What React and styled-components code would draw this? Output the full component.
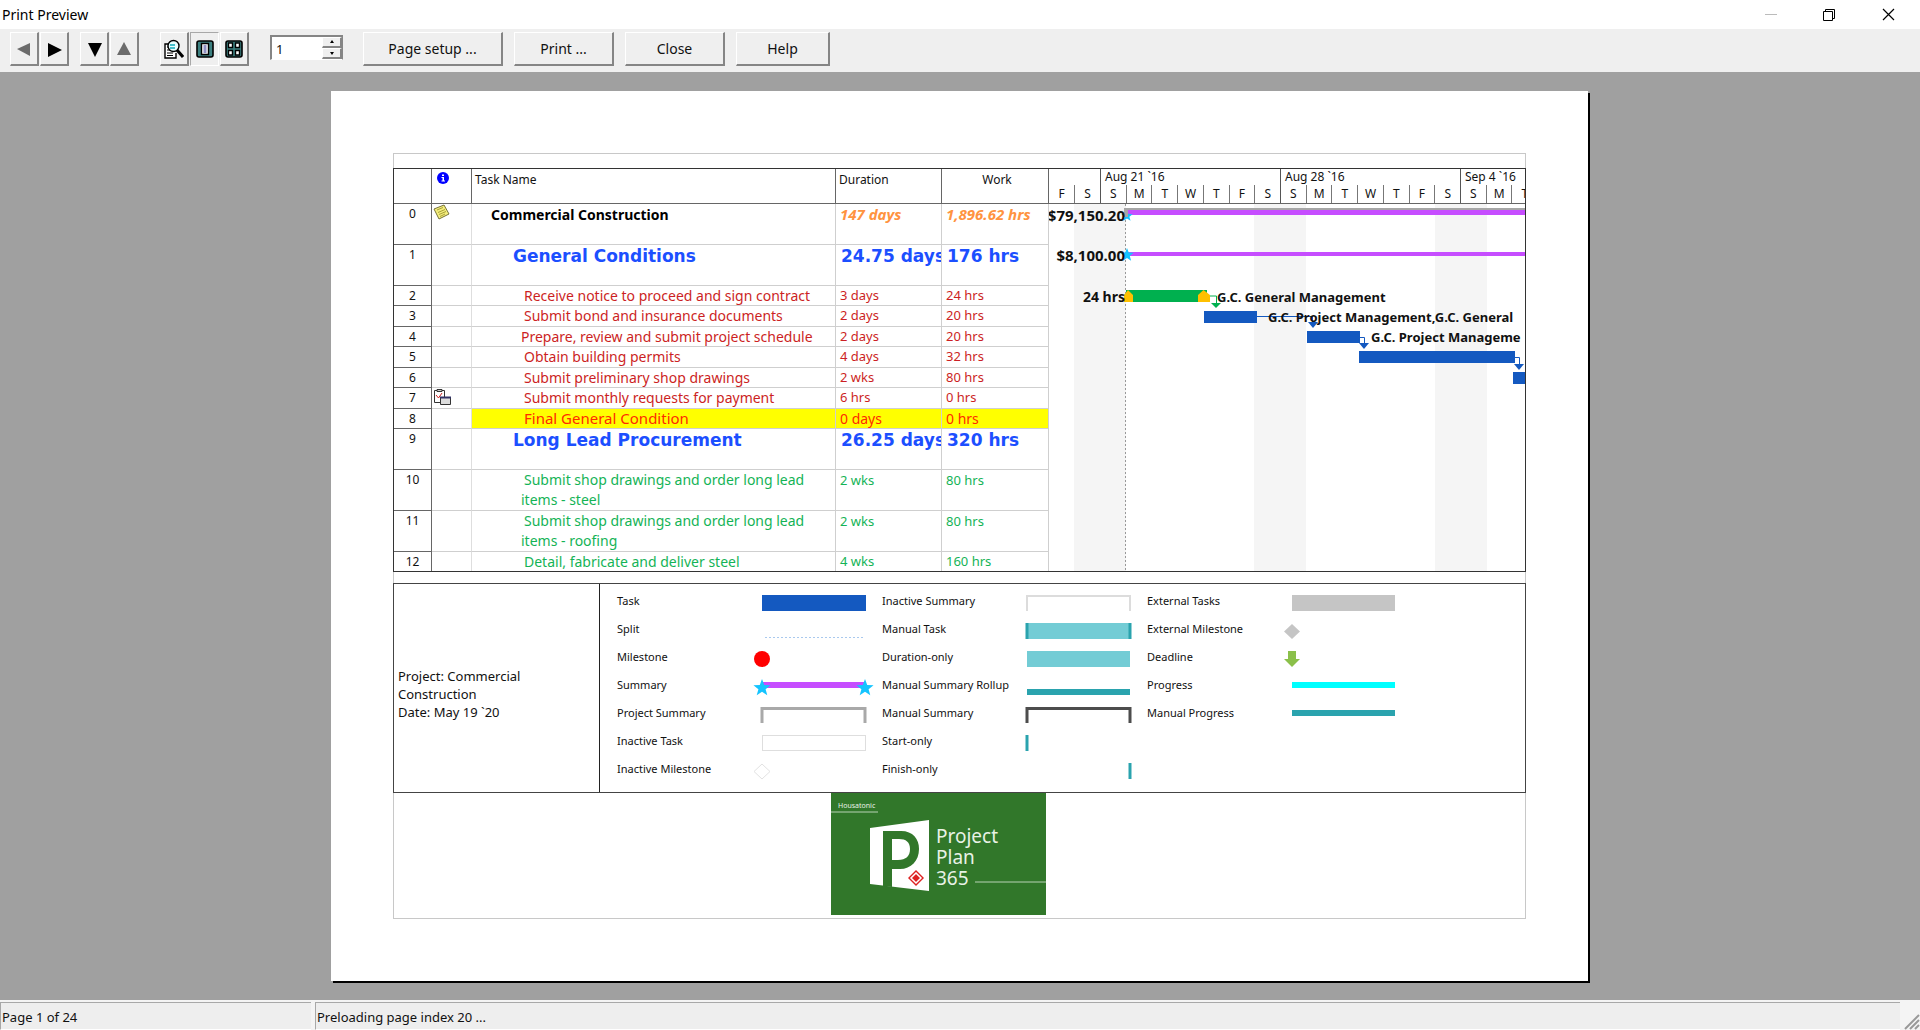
import React, { useState } from "react";
import styled, { createGlobalStyle, css } from "styled-components";

const weeks = [
  { label: "", days: ["F", "S"] },
  { label: "Aug 21 `16", days: ["S", "M", "T", "W", "T", "F", "S"] },
  { label: "Aug 28 `16", days: ["S", "M", "T", "W", "T", "F", "S"] },
  { label: "Sep 4 `16", days: ["S", "M", "T", "W", "T", "F", "S"] },
];

const tasks = [
  { name: "Commercial Construction", duration: "147 days", work: "1,896.62 hrs", kind: "project", tall: true, note: true },
  { name: "General Conditions", duration: "24.75 days", work: "176 hrs", kind: "summary", tall: true },
  { name: "Receive notice to proceed and sign contract", duration: "3 days", work: "24 hrs", kind: "red" },
  { name: "Submit bond and insurance documents", duration: "2 days", work: "20 hrs", kind: "red" },
  { name: "Prepare, review and submit project schedule", duration: "2 days", work: "20 hrs", kind: "red", flush: true },
  { name: "Obtain building permits", duration: "4 days", work: "32 hrs", kind: "red" },
  { name: "Submit preliminary shop drawings", duration: "2 wks", work: "80 hrs", kind: "red" },
  { name: "Submit monthly requests for payment", duration: "6 hrs", work: "0 hrs", kind: "red", recurring: true },
  { name: "Final General Condition", duration: "0 days", work: "0 hrs", kind: "final" },
  { name: "Long Lead Procurement", duration: "26.25 days", work: "320 hrs", kind: "summary", tall: true },
  { name: "Submit shop drawings and order long lead items - steel", duration: "2 wks", work: "80 hrs", kind: "green", tall: true },
  { name: "Submit shop drawings and order long lead items - roofing", duration: "2 wks", work: "80 hrs", kind: "green", tall: true },
  { name: "Detail, fabricate and deliver steel", duration: "4 wks", work: "160 hrs", kind: "green" },
];

const star = (x, y, r) =>
  Array.from({ length: 10 }, (_, i) => {
    const a = (Math.PI / 5) * i - Math.PI / 2;
    const d = i % 2 ? r * 0.42 : r;
    return `${x + d * Math.cos(a)},${y + d * Math.sin(a)}`;
  }).join(" ");

const TEAL = "#2aa3ae";
const AQUA = "#73ccd5";

const legend = [
  [
    ["Task", <rect width="104" height="16" fill="#1459c0" />],
    ["Split", <path d="M3 14.5H102" stroke="#a9c9ee" strokeDasharray="2 2" />],
    ["Milestone", <circle cx="0" cy="8" r="8" fill="#f00" />],
    [
      "Summary",
      <>
        <rect y="3" width="104" height="6" fill="#c64dff" />
        <polygon points={star(0, 9, 9)} fill="#14c4ff" />
        <polygon points={star(103, 9, 9)} fill="#14c4ff" />
      </>,
    ],
    ["Project Summary", <path d="M0 16V1.5H103V16" fill="none" stroke="#a9a9a9" strokeWidth="3" />],
    ["Inactive Task", <rect x="0.5" y="0.5" width="103" height="15" fill="none" stroke="#dedede" />],
    ["Inactive Milestone", <path d="M0 1L8 8.5L0 16L-8 8.5Z" fill="none" stroke="#e2e2e2" />],
  ],
  [
    ["Inactive Summary", <path d="M0 16V1H103V16" fill="none" stroke="#dcdcdc" strokeWidth="2" />],
    [
      "Manual Task",
      <>
        <rect width="104" height="16" fill={AQUA} />
        <path d="M0 0V16M103 0V16" stroke={TEAL} strokeWidth="3" />
      </>,
    ],
    ["Duration-only", <rect width="103" height="16" fill={AQUA} />],
    ["Manual Summary Rollup", <rect y="10" width="103" height="6" fill={TEAL} />],
    ["Manual Summary", <path d="M0 16V1.5H103V16" fill="none" stroke="#4d4d4d" strokeWidth="3" />],
    ["Start-only", <path d="M0 0V16" stroke={TEAL} strokeWidth="3" />],
    ["Finish-only", <path d="M103 0V16" stroke={TEAL} strokeWidth="3" />],
  ],
  [
    ["External Tasks", <rect width="103" height="16" fill="#c5c5c5" />],
    ["External Milestone", <path d="M0 1L8 8.5L0 16L-8 8.5Z" fill="#c5c5c5" />],
    ["Deadline", <path d="M-4 0H4V8H8L0 16L-8 8H-4Z" fill="#8bc04a" />],
    ["Progress", <rect y="3" width="103" height="6" fill="#0ff" />],
    ["Manual Progress", <rect y="3" width="103" height="6" fill={TEAL} />],
  ],
];

function App() {
  const [page, setPage] = useState(1);

  return (
    <Window>
      <GlobalStyle />
      <TitleBar>
        <Title>Print Preview</Title>
        <Caption aria-label="Minimize">
          <svg width="14" height="14">
            <path d="M2 6.5H14" stroke="#bbb" />
          </svg>
        </Caption>
        <Caption aria-label="Restore">
          <svg width="14" height="14" fill="none" stroke="#000">
            <path d="M1.5 3.5H10.5V12.5H1.5ZM3.5 3V1.5H12.5V10.5H11" />
          </svg>
        </Caption>
        <Caption aria-label="Close window">
          <svg width="14" height="14">
            <path d="M1 1L12 12M12 1L1 12" stroke="#000" strokeWidth="1.2" />
          </svg>
        </Caption>
      </TitleBar>

      <Toolbar>
        <Group>
          <IconButton aria-label="Previous page">
            <svg width="20" height="20">
              <path d="M3 10L16 4V17Z" fill="#6b6b6b" />
            </svg>
          </IconButton>
          <IconButton aria-label="Next page">
            <svg width="20" height="20">
              <path d="M18 11L4 4V18Z" fill="#000" />
            </svg>
          </IconButton>
        </Group>
        <Group>
          <IconButton aria-label="Page down">
            <svg width="20" height="20">
              <path d="M11 18L4 4H18Z" fill="#000" />
            </svg>
          </IconButton>
          <IconButton aria-label="Page up">
            <svg width="20" height="20">
              <path d="M10 3L17 16H3Z" fill="#6b6b6b" />
            </svg>
          </IconButton>
        </Group>
        <Group $wide>
          <IconButton aria-label="Zoom">
            <svg width="20" height="20" fill="none" stroke="#000" strokeWidth="1.4">
              <path d="M5 5H1V19H12V14" fill="#fff" />
              <path d="M3 8H5M3 11H6M3 14H9M3 16.5H9" strokeWidth="1" />
              <circle cx="9.5" cy="7" r="5.5" fill="#e8ffff" />
              <path d="M6 6H11M6 9H11" stroke="#1ab" />
              <path d="M13 11L19 18" strokeWidth="3" />
            </svg>
          </IconButton>
          <IconButton aria-label="Single page" aria-pressed="true" $pressed>
            <svg width="18" height="18">
              <rect x="1" y="1" width="16" height="16" rx="2" fill="#3c8080" stroke="#000" strokeWidth="1.6" />
              <path d="M5.500 3.500H12.500V14.500H5.500Z" fill="#fff" stroke="#000" strokeWidth="1.4" />
              <path d="M7.500 6H10.500M7.500 8H10.500M7.500 10H10.500M7.500 12H10.500" stroke="#228" />
            </svg>
          </IconButton>
          <IconButton aria-label="Multiple pages">
            <svg width="18" height="18">
              <rect x="1" y="1" width="16" height="16" rx="2" fill="#3c8080" stroke="#000" strokeWidth="1.6" />
              <path
                d="M3.500 3H7.500V7.500H3.500ZM10.500 3H14.500V7.500H10.500ZM3.500 10.500H7.500V15H3.500ZM10.500 10.500H14.500V15H10.500Z"
                fill="#fff"
                stroke="#000"
                strokeWidth="1.4"
              />
            </svg>
          </IconButton>
        </Group>
        <Spinner>
          <input
            type="text"
            aria-label="Page number"
            value={page}
            onChange={(e) => setPage(Number(e.target.value) || 1)}
          />
          <Steps>
            <button aria-label="Increase" onClick={() => setPage(Math.min(24, page + 1))}>
              <svg width="6" height="4">
                <path d="M3 0L5 3H1Z" />
              </svg>
            </button>
            <button aria-label="Decrease" onClick={() => setPage(Math.max(1, page - 1))}>
              <svg width="6" height="4">
                <path d="M3 4L5 1H1Z" />
              </svg>
            </button>
          </Steps>
        </Spinner>
        <TextButton $width={140}>Page setup ...</TextButton>
        <TextButton $width={100}>Print ...</TextButton>
        <TextButton $width={100}>Close</TextButton>
        <TextButton $width={94}>Help</TextButton>
      </Toolbar>

      <Viewport>
        <Sheet>
          <Margins>
            <Gantt>
              <TaskTable>
                <colgroup>
                  <col width="38" />
                  <col width="40" />
                  <col width="364" />
                  <col width="106" />
                  <col width="107" />
                </colgroup>
                <thead>
                  <tr>
                    <Head />
                    <Head>
                      <InfoIcon />
                    </Head>
                    <Head>Task Name</Head>
                    <Head>Duration</Head>
                    <Head $center>Work</Head>
                  </tr>
                </thead>
                <tbody>
                  {tasks.map((task, i) => (
                    <TaskRow key={i} $tall={task.tall}>
                      <IdCell>{i}</IdCell>
                      <IconCell>
                        {task.note && <NoteIcon />}
                        {task.recurring && <RecurringIcon />}
                      </IconCell>
                      <NameCell $kind={task.kind} $flush={task.flush}>
                        {task.name}
                      </NameCell>
                      <ValueCell $kind={task.kind}>{task.duration}</ValueCell>
                      <ValueCell $kind={task.kind}>{task.work}</ValueCell>
                    </TaskRow>
                  ))}
                </tbody>
              </TaskTable>
              <ChartPane>
                <Timescale>
                  {weeks.map((week, i) => (
                    <Week key={i} $full={week.days.length === 7}>
                      <WeekLabel>{week.label}</WeekLabel>
                      <Days>
                        {week.days.map((day, d) => (
                          <Day key={d}>{day}</Day>
                        ))}
                      </Days>
                    </Week>
                  ))}
                </Timescale>
                <Bars />
              </ChartPane>
            </Gantt>

            <Legend>
              <ProjectInfo>
                Project: Commercial Construction
                <br />
                Date: May 19 `20
              </ProjectInfo>
              <LegendGrid>
                {legend.map((column, c) => (
                  <LegendColumn key={c}>
                    {column.map(([label, shape]) => (
                      <LegendItem key={label}>
                        <LegendLabel>{label}</LegendLabel>
                        <svg width="104" height="16" overflow="visible">
                          {shape}
                        </svg>
                      </LegendItem>
                    ))}
                  </LegendColumn>
                ))}
              </LegendGrid>
            </Legend>

            <Footer>
              <Logo />
            </Footer>
          </Margins>
        </Sheet>
      </Viewport>

      <StatusBar>
        <Status $width={311}>Page {page} of 24</Status>
        <Status>Preloading page index 20 ...</Status>
        <Grip width="16" height="16">
          <path d="M1 15L15 1M6 15L15 6M11 15L15 11" stroke="#999" strokeWidth="2" />
        </Grip>
      </StatusBar>
    </Window>
  );
}

function Bars() {
  return (
    <Chart>
      <g fill="#f5f5f5">
        <rect x="25" width="52" height="100%" />
        <rect x="205" width="52" height="100%" />
        <rect x="386" width="52" height="100%" />
      </g>
      <path d="M76.500 0V367" stroke="#999" strokeDasharray="2 2" />

      <g fill="#c64dff">
        <rect x="77" y="6" width="4000" height="5" />
        <rect x="77" y="48" width="4000" height="4" />
      </g>
      <rect x="77" y="4" width="4000" height="2" fill="#a6a6a6" />
      <polygon points={star(78, 12, 6)} fill="#14c4ff" />
      <rect x="75" y="4" width="4" height="9" fill="#a6a6a6" />
      <polygon points={star(78, 51, 7)} fill="#14c4ff" />

      <rect x="77" y="86" width="81" height="12" fill="#00b04f" />
      <path d="M161 92H167.500V99" fill="none" stroke="#00b04f" />
      <path d="M162 99H172L167 104Z" fill="#00b04f" />
      <path d="M75 98V91L79 86L84 91V98ZM149 98V91L154.500 86L161 91V98Z" fill="#ffc000" />

      <g fill="#1459c0">
        <rect x="155" y="107" width="53" height="12" />
        <rect x="258" y="127" width="53" height="12" />
        <rect x="310" y="147" width="156" height="12" />
        <rect x="464" y="168" width="200" height="12" />
        <path d="M259 118H269L264 124Z" />
        <path d="M310 139H320L315 145Z" />
        <path d="M465 160H475L470 166Z" />
      </g>
      <path d="M208 112.500H263.500V118M311 133.500H315.500V139M466 153.500H470.500V160" fill="none" stroke="#1459c0" />

      <g fontSize="15" textAnchor="end">
        <text x="76" y="17">$79,150.20</text>
        <text x="76" y="57">$8,100.00</text>
      </g>
      <g fontSize="14" textAnchor="end">
        <text x="76" y="98">24 hrs</text>
      </g>
      <g fontSize="13">
        <text x="168" y="98">G.C. General Management</text>
        <text x="219" y="118">G.C. Project Management,G.C. General</text>
        <text x="322" y="138">G.C. Project Manageme</text>
      </g>
    </Chart>
  );
}

function InfoIcon() {
  return (
    <svg width="12" height="12">
      <circle cx="6" cy="6" r="6" fill="#00f" />
      <path d="M5 2.500H7V4H5ZM4.500 5H7V8.500H8V9.500H4.500V8.500H5.500V6H4.500Z" fill="#fff" />
    </svg>
  );
}

function NoteIcon() {
  return (
    <svg width="17" height="16">
      <path d="M1 5L11 1L16 10L6 15Z" fill="#f4ee7c" stroke="#77733a" />
      <path d="M4 6L10 3.500M5 8.500L12 5.500M6 10.500L13 7.500M7 12.500L12 10" stroke="#a89f3a" />
    </svg>
  );
}

function RecurringIcon() {
  return (
    <svg width="18" height="18" fill="none" stroke="#333">
      <path d="M1.500 2.500H11.500V14.500H1.500Z" fill="#fff" />
      <path d="M4 3.500V1.500H9V3.500Z" fill="#ccc" />
      <path d="M3 7L5.500 10L9 5" stroke="#c22" />
      <path d="M7.500 9.500H17.500V16.500H7.500Z" fill="#ddd" />
      <path d="M7 9.500H18" stroke="#336" strokeWidth="2" />
    </svg>
  );
}

function Logo() {
  return (
    <LogoSvg width="215" height="122" viewBox="0 0 215 122" role="img" aria-label="Housatonic Project Plan 365">
      <rect width="215" height="122" fill="#31772a" />
      <text x="7" y="15" fontSize="7">Housatonic</text>
      <path d="M0 19H47M144 89H215" stroke="#b9d3b5" />
      <path d="M39 35L98 27V98L39 91Z" fill="#fff" />
      <path
        fillRule="evenodd"
        d="M52 38H70C82 38 88 46 88 56C88 68 80 76 69 76H61V94L52 93ZM61 46V67H67C75 67 79 63 79 56C79 49 75 46 68 46Z"
        fill="#31772a"
      />
      <path d="M85 77L93 85L85 93L77 85Z" fill="#d22" />
      <path d="M85 80L90 85L85 90L80 85Z" fill="none" stroke="#fff" strokeWidth="1.5" />
      <g fontSize="19">
        <text x="105" y="50">Project</text>
        <text x="105" y="71">Plan</text>
        <text x="105" y="92">365</text>
      </g>
    </LogoSvg>
  );
}

const GlobalStyle = createGlobalStyle`
  * {
    box-sizing: border-box;
  }

  body {
    margin: 0;
    font-family: "Noto Sans", "Open Sans", sans-serif;
    color: #111;
  }

  button, input {
    font-family: inherit;
    color: inherit;
  }
`;

const Window = styled.div`
  min-height: 100vh;
  display: flex;
  flex-direction: column;
  background-color: #a0a0a0;
`;

const TitleBar = styled.header`
  height: 29px;
  display: flex;
  align-items: center;
  background-color: #fff;
`;

const Title = styled.h1`
  flex: 1;
  margin: 0;
  padding-left: 2px;
  font-size: 14px;
  font-weight: 400;
  line-height: 28px;
  color: #000;
`;

const Caption = styled.button`
  width: 59px;
  height: 28px;
  padding: 0;
  border: none;
  background: none;
  display: flex;
  align-items: center;
  justify-content: center;

  &:last-child {
    width: 62px;
  }
`;

const Toolbar = styled.div`
  height: 43px;
  padding: 3px 10px 6px;
  display: flex;
  align-items: flex-start;
  gap: 11px;
  background-color: #efefef;
`;

const Group = styled.div`
  display: flex;
  gap: 1px;

  ${(props) => props.$wide && css`
    margin: 0 10px;
  `}
`;

const raised = css`
  border: 1px solid #fff;
  border-right: 2px solid #858585;
  border-bottom: 2px solid #858585;
  background-color: #efefef;
`;

const IconButton = styled.button`
  ${raised}
  width: 29px;
  height: 34px;
  padding: 0;
  display: flex;
  align-items: center;
  justify-content: center;

  ${(props) => props.$pressed && css`
    border: 1px solid #a8a8a8;
    border-right-color: #fff;
    border-bottom-color: #fff;
  `}
`;

const TextButton = styled.button`
  ${raised}
  width: ${(props) => props.$width}px;
  height: 34px;
  font-size: 14px;
  line-height: 20px;
  padding: 0;
`;

const Spinner = styled.div`
  width: 73px;
  height: 25px;
  margin: 3px 9px 0 0;
  display: flex;
  border: 2px solid #858585;
  border-right: 1px solid #858585;
  border-bottom: 1px solid #fff;
  background-color: #fff;

  input {
    flex: 1;
    width: 100%;
    border: none;
    outline: none;
    padding: 2px 4px 0;
    font-size: 13px;
    background: none;
  }
`;

const Steps = styled.div`
  width: 20px;
  display: flex;
  flex-direction: column;

  button {
    flex: 1;
    padding: 0;
    border: 1px solid #fff;
    border-right: 2px solid #858585;
    border-bottom: 2px solid #858585;
    background-color: #efefef;
    display: flex;
    align-items: center;
    justify-content: center;
  }
`;

const Viewport = styled.main`
  flex: 1;
  display: flex;
  padding: 19px 332px 19px 331px;
`;

const Sheet = styled.section`
  flex: 1;
  min-width: 0;
  padding: 62px;
  background-color: #fff;
  box-shadow: 2px 2px 0 #000;
`;

const Margins = styled.div`
  min-height: 100%;
  padding: 14px 0 3px;
  border: 1px solid #c8c8c8;
`;

const Gantt = styled.div`
  display: flex;
  margin: 0 -1px 11px;
  border: 1px solid #333;
`;

const TaskTable = styled.table`
  flex: none;
  width: 655px;
  table-layout: fixed;
  border-spacing: 0;
  line-height: 19px;

  th, td {
    padding: 0;
    vertical-align: top;
    text-align: left;
    border-right: 1px solid #cfcfcf;
    border-bottom: 1px solid #cfcfcf;
  }

  tbody tr:last-child td {
    border-bottom: none;
  }
`;

const Head = styled.th`
  && {
    height: 35px;
    padding: 0 2px 0 ${(props) => (props.$center ? 6 : 3)}px;
    border-color: #666;
    font-size: 12px;
    font-weight: 400;
    line-height: 21px;
    text-align: ${(props) => (props.$center ? "center" : "left")};
  }

  svg {
    display: block;
    margin: 3px 0 0 2px;
  }
`;

const TaskRow = styled.tr`
  height: ${(props) => (props.$tall ? 41 : 20)}px;
  line-height: ${(props) => (props.$tall ? 20 : 19)}px;

  &:nth-child(even) {
    height: ${(props) => (props.$tall ? 41 : 21)}px;
  }

  &:last-child {
    height: 19px;
  }
`;

const IdCell = styled.td`
  && {
    text-align: center;
    border-color: #666;
    font-size: 12px;
    line-height: 19px;
  }
`;

const IconCell = styled.td`
  && {
    border-right-color: #dedede;
  }

  svg {
    display: block;
    margin-left: 1px;
  }
`;

const kinds = {
  project: css`
    color: #ff9340;
    font-size: 15px;
    font-weight: 700;
    font-style: italic;
  `,
  summary: css`
    color: #1c4fff;
    font-family: "DejaVu Sans", Verdana, sans-serif;
    font-size: 17px;
    line-height: 22px;
    font-weight: 700;
  `,
  red: css`
    color: #cc1f24;
    font-size: 13px;
  `,
  green: css`
    color: #14b356;
    font-size: 13px;
  `,
  final: css`
    color: #ff2a00;
    font-size: 14px;
    background-color: #ff0;
  `,
};

const indents = { project: 19, summary: 41, red: 49, green: 49, final: 52 };

const isPlain = (kind) => kind === "red" || kind === "green";

const NameCell = styled.td`
  ${(props) => kinds[props.$kind]}

  && {
    padding: 0 4px 0 ${(props) => indents[props.$kind]}px;
    text-indent: ${(props) => (isPlain(props.$kind) && !props.$flush ? 3 : 0)}px;
  }

  ${(props) => isPlain(props.$kind) && css`
    font-size: 14px;
  `}

  ${(props) => props.$kind === "final" && css`
    font-size: 15px;
  `}

  ${(props) => props.$kind === "project" && css`
    color: #000;
    font-style: normal;
    font-size: 14px;
    line-height: 22px;
  `}
`;

const ValueCell = styled.td`
  ${(props) => kinds[props.$kind]}
  overflow: hidden;
  white-space: nowrap;

  && {
    padding-left: ${(props) => (props.$kind === "summary" ? 5 : 4)}px;
  }
`;

const ChartPane = styled.div`
  flex: 1;
  min-width: 0;
  overflow: hidden;
`;

const Timescale = styled.div`
  height: 35px;
  display: flex;
  overflow: hidden;
  border-bottom: 1px solid #666;
  font-size: 12px;
`;

const Week = styled.div`
  flex: none;
  width: ${(props) => (props.$full ? 180 : 51)}px;
  display: flex;
  flex-direction: column;
  border-left: 1px solid #555;

  &:first-child {
    border-left: none;
  }
`;

const WeekLabel = styled.div`
  height: 17px;
  padding-left: 4px;
  line-height: 15px;
`;

const Days = styled.div`
  flex: 1;
  display: flex;
`;

const Day = styled.div`
  flex: 1;
  border-left: 1px solid #777;
  text-align: center;
  line-height: 18px;

  &:first-child {
    border-left: none;
  }
`;

const Chart = styled.svg`
  display: block;
  width: 100%;
  height: 367px;

  text {
    font-weight: 700;
    fill: #111;
  }
`;

const Legend = styled.div`
  display: flex;
  height: 210px;
  margin: 0 -1px;
  border: 1px solid #444;
`;

const ProjectInfo = styled.div`
  width: 205px;
  padding: 12px 50px 0 4px;
  align-self: center;
  font-size: 13px;
  line-height: 18px;
`;

const LegendGrid = styled.div`
  flex: 1;
  display: flex;
  gap: 16px;
  padding: 5px 17px;
  border-left: 1px solid #222;
`;

const LegendColumn = styled.div`
  width: 249px;
`;

const LegendItem = styled.div`
  height: 28px;
  display: flex;
  align-items: center;
`;

const LegendLabel = styled.span`
  width: 145px;
  align-self: flex-start;
  font-size: 11px;
  line-height: 24px;
  white-space: nowrap;
`;

const Footer = styled.div`
  display: flex;
  justify-content: center;
  padding-right: 42px;
`;

const LogoSvg = styled.svg`
  display: block;

  text {
    fill: #e8f2e6;
  }
`;

const StatusBar = styled.footer`
  height: 31px;
  padding: 2px 0 1px;
  display: flex;
  align-items: stretch;
  gap: 4px;
  background-color: #f4f4f4;
`;

const Status = styled.div`
  ${(props) => (props.$width ? `width: ${props.$width}px;` : "flex: 1;")}
  padding-left: 1px;
  border-top: 1px solid #a8a8a8;
  border-left: 1px solid #a8a8a8;
  border-bottom: 1px solid #fff;
  background-color: #eee;
  font-size: 13px;
  line-height: 28px;
`;

const Grip = styled.svg`
  align-self: flex-end;
`;

export default App;
